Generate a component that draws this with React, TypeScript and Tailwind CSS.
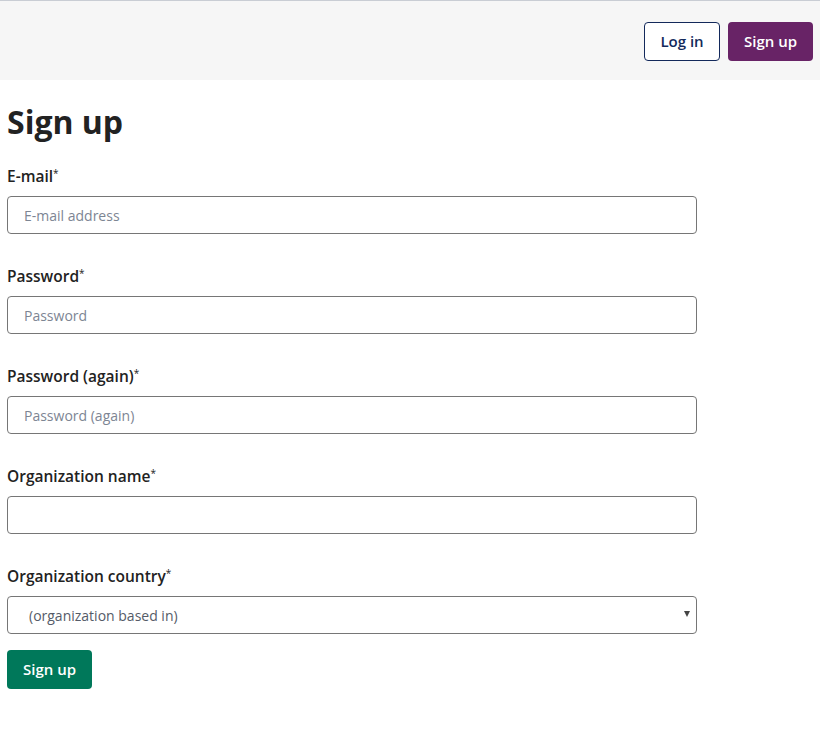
import { useState } from "react";

const FIELDS = [
  { id: "email", label: "E-mail", type: "email", placeholder: "E-mail address" },
  { id: "password1", label: "Password", type: "password", placeholder: "Password" },
  { id: "password2", label: "Password (again)", type: "password", placeholder: "Password (again)" },
  { id: "org", label: "Organization name", type: "text", placeholder: "" },
];

export default function App() {
  const [country, setCountry] = useState("");

  return (
    <div className="min-h-[748px] bg-white text-[#222] font-['Open_Sans',sans-serif]">
      <header className="h-[80px] border-t border-[#c9cdd4] bg-[#f6f6f6] flex items-center justify-end gap-2 pr-[7px] pt-[2px]">
        <button className="h-[39px] w-[76px] rounded-[4px] border border-[#13295b] bg-white text-[15px] font-semibold text-[#13295b]">
          Log in
        </button>
        <button className="h-[39px] w-[85px] rounded-[4px] bg-[#682366] text-[15px] font-semibold text-white">
          Sign up
        </button>
      </header>

      <main className="px-[7px] pt-[23px]">
        <h1 className="text-[32px] leading-[38px] font-bold text-[#222] mb-[25px]">Sign up</h1>

        <form className="w-[690px]" onSubmit={(e) => e.preventDefault()}>
          {FIELDS.map((f) => (
            <div key={f.id} className="mb-[32px]">
              <label htmlFor={f.id} className="block text-[15.5px] leading-[20px] font-semibold text-[#222] mb-[10px]">
                {f.label}
                <sup className="text-[10px] font-normal">*</sup>
              </label>
              <input
                id={f.id}
                type={f.type}
                placeholder={f.placeholder}
                className="block w-full h-[38px] rounded-[4px] border border-[#767676] px-4 text-[14px] text-[#222] placeholder:text-[#7d8593] outline-none"
              />
            </div>
          ))}

          <div className="mb-[16px]">
            <label htmlFor="country" className="block text-[15.5px] leading-[20px] font-semibold text-[#222] mb-[10px]">
              Organization country
              <sup className="text-[10px] font-normal">*</sup>
            </label>
            <div className="relative">
              <select
                id="country"
                value={country}
                onChange={(e) => setCountry(e.target.value)}
                className="block w-full h-[38px] appearance-none rounded-[4px] border border-[#767676] bg-white pl-[21px] text-[14px] text-[#555b68] outline-none"
              >
                <option value="">(organization based in)</option>
                <option value="fi">Finland</option>
                <option value="se">Sweden</option>
              </select>
              <span className="pointer-events-none absolute right-[7px] top-[15px] h-0 w-0 border-x-[3.5px] border-t-[6px] border-x-transparent border-t-[#444]" />
            </div>
          </div>

          <button type="submit" className="h-[39px] w-[85px] rounded-[4px] bg-[#00785a] text-[15px] font-semibold text-white">
            Sign up
          </button>
        </form>
      </main>
    </div>
  );
}
